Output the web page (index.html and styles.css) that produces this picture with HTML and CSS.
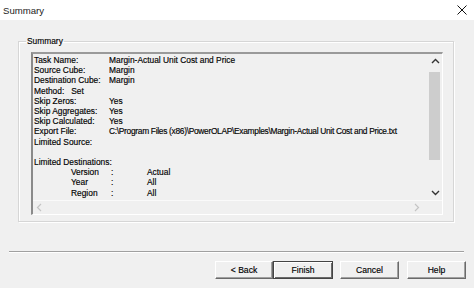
FILE: index.html
```html
<!DOCTYPE html>
<html lang="en">
<head>
  <meta charset="UTF-8" />
  <title>Summary</title>
  <link rel="stylesheet" href="styles.css">
</head>
<body>
  <div class="dialog">
    <!-- Title bar -->
    <div class="titlebar">
      <span class="title">Summary</span>
      <svg class="close" width="10" height="10" viewBox="0 0 10 10">
        <path d="M0.5 0.5 L9.5 9.5 M9.5 0.5 L0.5 9.5" stroke="#111" stroke-width="1" fill="none"/>
      </svg>
    </div>

    <div class="body">
      <!-- Summary group -->
      <fieldset class="group">
        <legend>Summary</legend>
        <div class="listbox">
          <div class="list-main">
            <div class="list-text">
              <div class="row"><span class="key">Task Name:</span><span>Margin-Actual Unit Cost and Price</span></div>
              <div class="row"><span class="key">Source Cube:</span><span>Margin</span></div>
              <div class="row"><span class="key">Destination Cube:</span><span>Margin</span></div>
              <div class="row">Method:&nbsp;&nbsp;&nbsp;Set</div>
              <div class="row"><span class="key">Skip Zeros:</span><span>Yes</span></div>
              <div class="row"><span class="key">Skip Aggregates:</span><span>Yes</span></div>
              <div class="row"><span class="key">Skip Calculated:</span><span>Yes</span></div>
              <div class="row"><span class="key">Export File:</span><span class="path">C:\Program Files (x86)\PowerOLAP\Examples\Margin-Actual Unit Cost and Price.txt</span></div>
              <div class="row">Limited Source:</div>
              <div class="row">&nbsp;</div>
              <div class="row">Limited Destinations:</div>
              <div class="row dest"><span class="dim">Version</span><span class="colon">:</span><span>Actual</span></div>
              <div class="row dest"><span class="dim">Year</span><span class="colon">:</span><span>All</span></div>
              <div class="row dest"><span class="dim">Region</span><span class="colon">:</span><span>All</span></div>
            </div>
            <div class="vscroll">
              <svg class="arrow" width="9" height="6" viewBox="0 0 9 6">
                <path d="M1 5 L4.5 1.5 L8 5" stroke="#333" stroke-width="1.4" fill="none"/>
              </svg>
              <div class="vtrack"><div class="thumb"></div></div>
              <svg class="arrow" width="9" height="6" viewBox="0 0 9 6">
                <path d="M1 1 L4.5 4.5 L8 1" stroke="#333" stroke-width="1.4" fill="none"/>
              </svg>
            </div>
          </div>
          <div class="hscroll">
            <svg width="6" height="9" viewBox="0 0 6 9">
              <path d="M5 1 L1.5 4.5 L5 8" stroke="#c4c4c4" stroke-width="1.2" fill="none"/>
            </svg>
            <div class="htrack"></div>
            <svg width="6" height="9" viewBox="0 0 6 9">
              <path d="M1 1 L4.5 4.5 L1 8" stroke="#c4c4c4" stroke-width="1.2" fill="none"/>
            </svg>
            <div class="corner"></div>
          </div>
        </div>
      </fieldset>

      <div class="separator"></div>

      <!-- Wizard buttons -->
      <div class="buttons">
        <div class="pair">
          <button class="btn">&lt; Back</button>
          <button class="btn default">Finish</button>
        </div>
        <button class="btn">Cancel</button>
        <button class="btn">Help</button>
      </div>
    </div>
  </div>
</body>
</html>
```

FILE: styles.css
```css
/* Basic reset */
* {
  margin: 0;
  padding: 0;
  box-sizing: border-box;
}

body {
  width: 474px;
  height: 288px;
  background-color: #f0f0f0;
  font-family: "Liberation Sans", Arial, sans-serif;
  font-size: 8.4px;
  color: #000;
  -webkit-text-stroke: 0.15px #000;
  overflow: hidden;
}

.dialog {
  display: flex;
  flex-direction: column;
  height: 288px;
}

/* Title bar */
.titlebar {
  height: 20px;
  background-color: #fff;
  display: flex;
  align-items: center;
  justify-content: space-between;
  padding: 0 7px 0 3px;
}

.title {
  font-size: 9.6px;
  color: #222;
  -webkit-text-stroke: 0;
}

.body {
  flex: 1;
  padding: 17px 0 0 0;
  display: flex;
  flex-direction: column;
}

/* Group box */
.group {
  margin-left: 18px;
  width: 436px;
  height: 185px;
  border: 1px solid #d6d6d6;
  box-shadow: inset 1px 1px 0 #fff, 1px 1px 0 #fff;
  padding: 5px 10px 9px 12px;
}

.group legend {
  margin-left: -5px;
  padding: 0 1px;
  line-height: 9px;
}

/* List box */
.listbox {
  height: 163px;
  margin-top: 1px;
  border-top: 2px solid #9a9a9a;
  border-left: 2px solid #8a8a8a;
  border-right: 1px solid #fff;
  border-bottom: 1px solid #fff;
  display: flex;
  flex-direction: column;
}

.list-main {
  flex: 1;
  display: flex;
}

.list-text {
  flex: 1;
  padding: 1px 0 0 1px;
  line-height: 10.2px;
  white-space: nowrap;
  overflow: hidden;
}

.row {
  display: flex;
}

.key {
  width: 75px;
}

.path {
  letter-spacing: -0.3px;
}

.dest {
  padding-left: 37px;
}

.dim {
  width: 40px;
}

.colon {
  width: 36px;
}

/* Vertical scroll bar */
.vscroll {
  width: 14px;
  display: flex;
  flex-direction: column;
  align-items: center;
  padding-top: 4px;
}

.vtrack {
  flex: 1;
  width: 100%;
  padding: 4px 2px 0 1px;
}

.thumb {
  height: 88px;
  background-color: #cdcdcd;
}

.arrow {
  flex: none;
  margin-bottom: 4px;
}

/* Horizontal scroll bar */
.hscroll {
  height: 14px;
  border-top: 1px solid #fafafa;
  display: flex;
  align-items: center;
  padding-left: 3px;
}

.htrack {
  flex: 1;
}

.corner {
  width: 14px;
  height: 13px;
  margin-left: 8px;
}

.separator {
  margin: 29px 10px 0 9px;
  border-top: 1px solid #a0a0a0;
  border-bottom: 1px solid #fff;
}

/* Buttons */
.buttons {
  display: flex;
  justify-content: flex-end;
  gap: 8px;
  padding: 8px 8px 0 0;
}

.pair {
  display: flex;
  margin-right: -1px;
}

.btn {
  width: 59px;
  height: 18px;
  font-family: "Liberation Sans", Arial, sans-serif;
  font-size: 8.6px;
  color: #000;
  -webkit-text-stroke: 0.15px #000;
  background-color: #f0f0f0;
  border: 1px solid;
  border-color: #fff #6a6a6a #6a6a6a #fff;
  box-shadow: inset -1px -1px 0 #a0a0a0;
}

.pair .btn {
  width: 58px;
}

.btn.default {
  width: 60px;
  border: 1px solid #444;
  box-shadow: inset 1px 1px 0 #fff, inset -1px -1px 0 #6a6a6a;
}
```
